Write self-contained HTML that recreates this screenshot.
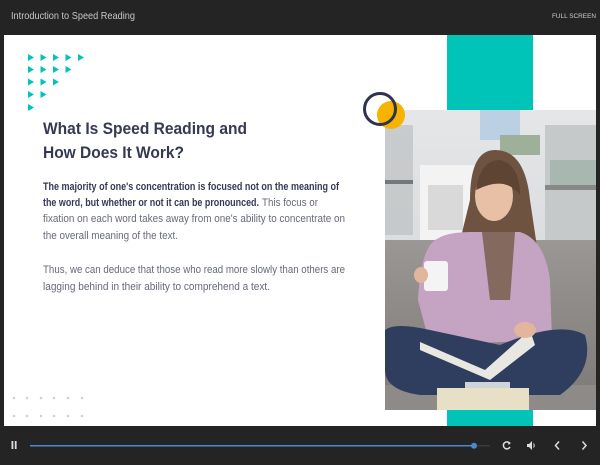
<!DOCTYPE html>
<html><head><meta charset="utf-8"><style>
html,body{margin:0;padding:0;width:600px;height:465px;overflow:hidden;background:#242424;font-family:"Liberation Sans",sans-serif}
</style></head><body>
<svg width="600" height="465" viewBox="0 0 600 465" xmlns="http://www.w3.org/2000/svg" style="display:block">
<defs>
<linearGradient id="bg" x1="0" y1="0" x2="0" y2="1"><stop offset="0" stop-color="#e4e6e8"/><stop offset="1" stop-color="#cfd2d4"/></linearGradient>
<linearGradient id="sofa" x1="0" y1="0" x2="0" y2="1"><stop offset="0" stop-color="#9a9795"/><stop offset="1" stop-color="#7f7c7a"/></linearGradient>
</defs>
<rect width="600" height="465" fill="#242424"/>
<text x="11" y="19" font-size="10.5" fill="#c8c8c8" textLength="124" lengthAdjust="spacingAndGlyphs">Introduction to Speed Reading</text>
<text x="552" y="18" font-size="6.5" fill="#cfcfcf" textLength="44" lengthAdjust="spacingAndGlyphs">FULL SCREEN</text>
<rect x="4" y="35" width="592" height="391" fill="#fff"/>
<!-- teal blocks -->
<rect x="447" y="35" width="86" height="75" fill="#00c4b8"/>
<rect x="447" y="410" width="86" height="16" fill="#00c4b8"/>
<!-- photo -->
<g>
<rect x="385" y="110" width="211" height="300" fill="url(#bg)"/>
<rect x="385" y="125" width="28" height="110" fill="#b8bbbd" opacity=".6"/>
<rect x="385" y="180" width="28" height="4" fill="#777"/>
<rect x="420" y="165" width="55" height="75" fill="#f3f3f3"/>
<rect x="428" y="185" width="35" height="45" fill="#d9d9d9"/>
<rect x="480" y="110" width="40" height="30" fill="#bcd0e4"/>
<rect x="500" y="135" width="40" height="20" fill="#9fb09a"/>
<rect x="545" y="125" width="51" height="115" fill="#c6c9c9"/>
<rect x="550" y="160" width="46" height="25" fill="#a8b8b0"/>
<rect x="545" y="185" width="51" height="5" fill="#888"/>
<rect x="385" y="240" width="211" height="150" fill="url(#sofa)"/>
<rect x="385" y="385" width="211" height="25" fill="#8d8a88"/>
<!-- hair -->
<path d="M470 200 Q470 150 495 150 Q525 150 530 200 L545 300 Q520 320 505 300 L480 300 Q455 310 448 290 Z" fill="#6e5440"/>
<ellipse cx="494" cy="196" rx="19" ry="25" fill="#e8c0a6"/>
<path d="M476 190 Q480 160 500 160 Q520 165 520 195 Q505 175 476 190Z" fill="#5e4433"/>
<!-- sweater -->
<path d="M430 245 Q440 232 470 232 L520 232 Q545 240 550 280 L552 340 L430 345 L418 300 Q420 260 430 245Z" fill="#c4a3c3"/>
<path d="M482 232 L490 300 L510 300 L515 232Z" fill="#745a46" opacity=".8"/>
<!-- cup -->
<rect x="424" y="261" width="24" height="30" rx="3" fill="#f4f4f4"/>
<ellipse cx="421" cy="275" rx="7" ry="8" fill="#e2b69c"/>
<!-- jeans -->
<path d="M385 330 Q395 322 430 330 L500 345 Q560 320 585 335 Q595 370 560 395 L420 395 Q385 390 385 370Z" fill="#2f3e5e"/>
<!-- magazine -->
<path d="M420 342 L485 370 L530 330 L535 345 L490 380 L420 350Z" fill="#e9e7e2"/>
<ellipse cx="525" cy="330" rx="11" ry="8" fill="#e2b69c"/>
<rect x="437" y="388" width="92" height="22" fill="#e8dfc7"/>
<rect x="465" y="382" width="45" height="6" fill="#cfd4d8"/>
</g>
<!-- circles -->
<circle cx="391" cy="115" r="14" fill="#f6b400"/>
<circle cx="380" cy="109" r="15.5" fill="none" stroke="#2f3350" stroke-width="3"/>
<!-- triangles -->
<g fill="#00c4b8">
<path d="M28 54l6 3.5-6 3.5z M40.5 54l6 3.5-6 3.5z M53 54l6 3.5-6 3.5z M65.5 54l6 3.5-6 3.5z M78 54l6 3.5-6 3.5z"/>
<path d="M28 66l6 3.5-6 3.5z M40.5 66l6 3.5-6 3.5z M53 66l6 3.5-6 3.5z M65.5 66l6 3.5-6 3.5z"/>
<path d="M28 78.5l6 3.5-6 3.5z M40.5 78.5l6 3.5-6 3.5z M53 78.5l6 3.5-6 3.5z"/>
<path d="M28 91l6 3.5-6 3.5z M40.5 91l6 3.5-6 3.5z"/>
<path d="M28 104l6 3.5-6 3.5z"/>
</g>
<!-- dots -->
<g fill="#d2d2d2">
<circle cx="14" cy="398" r="1.3"/><circle cx="27" cy="398" r="1.3"/><circle cx="41" cy="398" r="1.3"/><circle cx="54" cy="398" r="1.3"/><circle cx="68" cy="398" r="1.3"/><circle cx="82" cy="398" r="1.3"/>
<circle cx="14" cy="416" r="1.3"/><circle cx="27" cy="416" r="1.3"/><circle cx="41" cy="416" r="1.3"/><circle cx="54" cy="416" r="1.3"/><circle cx="68" cy="416" r="1.3"/><circle cx="82" cy="416" r="1.3"/>
</g>
<!-- text -->
<g fill="#353a52" font-weight="bold" font-size="17">
<text x="43" y="134" textLength="204" lengthAdjust="spacingAndGlyphs">What Is Speed Reading and</text>
<text x="43" y="158" textLength="141" lengthAdjust="spacingAndGlyphs">How Does It Work?</text>
</g>
<g font-size="11">
<text x="43" y="190" fill="#353a52" font-weight="bold" textLength="296" lengthAdjust="spacingAndGlyphs">The majority of one's concentration is focused not on the meaning of</text>
<text x="43" y="206" fill="#353a52" font-weight="bold" textLength="216" lengthAdjust="spacingAndGlyphs">the word, but whether or not it can be pronounced.</text>
<text x="262" y="206" fill="#666a7a" textLength="56" lengthAdjust="spacingAndGlyphs">This focus or</text>
<text x="43" y="222" fill="#666a7a" textLength="302" lengthAdjust="spacingAndGlyphs">fixation on each word takes away from one's ability to concentrate on</text>
<text x="43" y="239" fill="#666a7a" textLength="135" lengthAdjust="spacingAndGlyphs">the overall meaning of the text.</text>
<text x="43" y="273" fill="#666a7a" textLength="302" lengthAdjust="spacingAndGlyphs">Thus, we can deduce that those who read more slowly than others are</text>
<text x="43" y="290" fill="#666a7a" textLength="227" lengthAdjust="spacingAndGlyphs">lagging behind in their ability to comprehend a text.</text>
</g>
<!-- bottom bar -->
<rect x="11.5" y="441" width="1.8" height="8" fill="#ddd"/><rect x="14.8" y="441" width="1.8" height="8" fill="#ddd"/>
<rect x="30" y="445" width="460" height="1.5" fill="#3a3a3a"/>
<rect x="30" y="445" width="444" height="1.5" fill="#4a88cf"/>
<circle cx="474" cy="445.8" r="3" fill="#4a88cf"/>
<path d="M509.5 443 A3.5 3.5 0 1 0 510 447" fill="none" stroke="#ddd" stroke-width="1.5"/>
<path d="M508 441.5l3 1.5-2.5 2z" fill="#ddd"/>
<path d="M527 444h2l3-3v9l-3-3h-2z" fill="#ddd"/><path d="M533.5 443.5q1.5 2 0 4" stroke="#ddd" fill="none"/>
<path d="M559 441.5l-3.5 4 3.5 4" stroke="#ddd" stroke-width="1.5" fill="none"/>
<path d="M582.5 441.5l3.5 4-3.5 4" stroke="#ddd" stroke-width="1.5" fill="none"/>
</svg>
</body></html>
